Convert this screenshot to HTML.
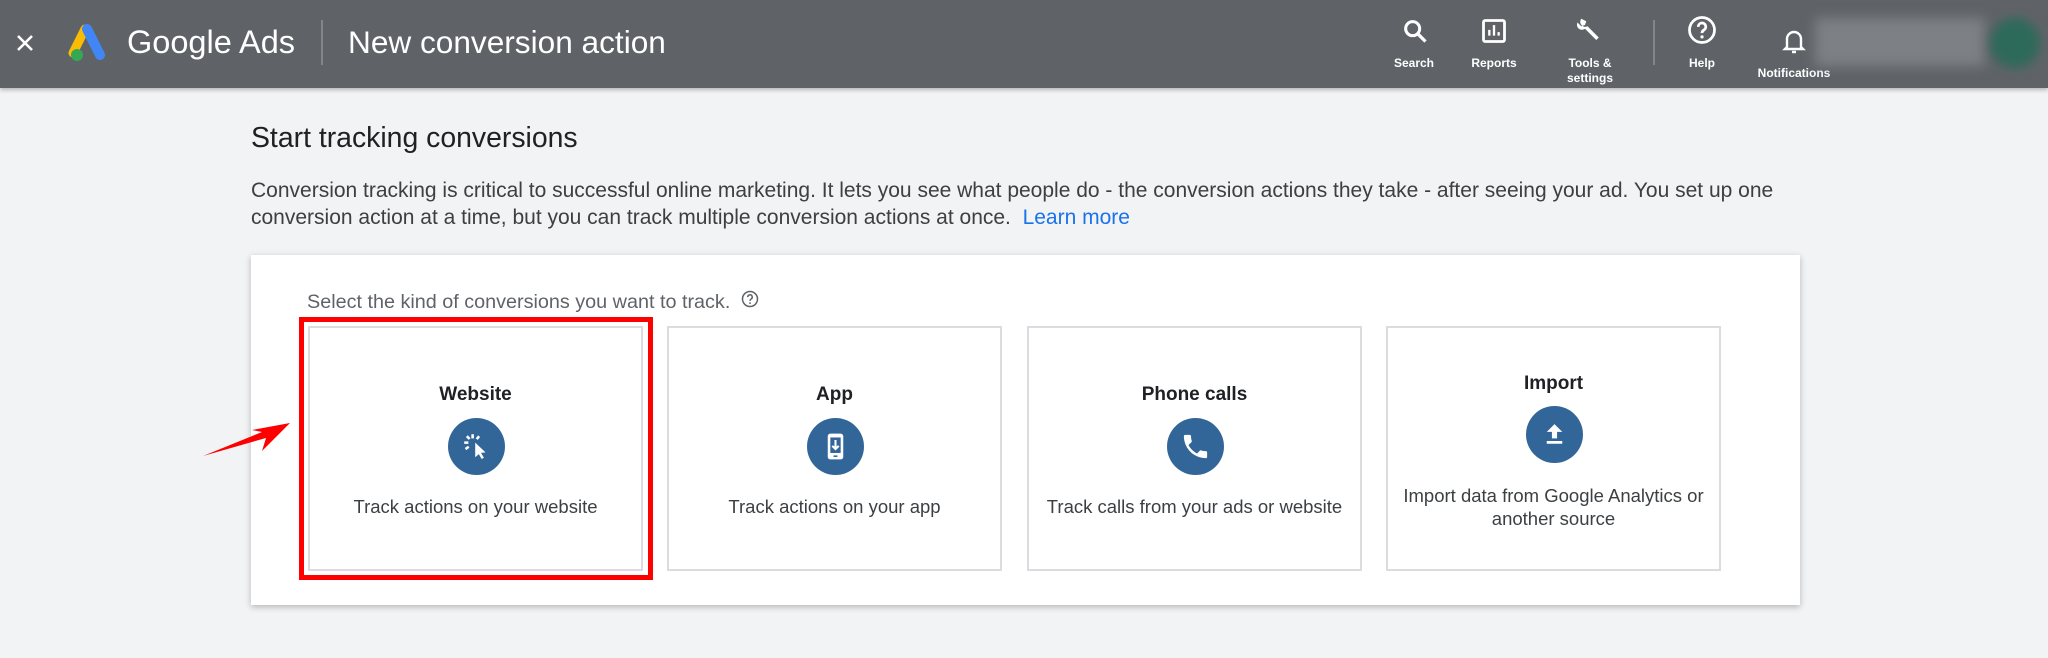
<!DOCTYPE html>
<html><head><meta charset="utf-8"><style>
*{margin:0;padding:0;box-sizing:border-box}
body{width:2048px;height:658px;background:#f1f3f4;font-family:"Liberation Sans",Arial,sans-serif;position:relative;overflow:hidden}
.hdr{position:absolute;left:0;top:0;width:2048px;height:88px;background:#5f6368;box-shadow:0 2px 4px rgba(0,0,0,.25)}
.a{position:absolute}
.lbl{position:absolute;color:#fff;font-size:12px;font-weight:bold;text-align:center;transform:translateX(-50%);line-height:15px;white-space:nowrap}
.panel{position:absolute;left:251px;top:255px;width:1549px;height:350px;background:#fff;box-shadow:0 2px 6px rgba(0,0,0,.25)}
.card{position:absolute;top:326px;width:335px;height:245px;border:2px solid #dadce0;background:#fff;text-align:center}
.card h3{position:absolute;left:0;right:0;font-size:19px;font-weight:bold;color:#202124}
.card .ic{position:absolute;left:50%;width:57px;height:57px;margin-left:-28px;border-radius:50%;background:#326699}
.card .ic svg{position:absolute;left:13px;top:13px}
.card p{position:absolute;left:0;right:0;font-size:18.5px;color:#3c4043;line-height:23px}
</style></head><body>
<div class="hdr">
<svg class="a" style="left:15px;top:33px" width="20" height="20" viewBox="0 0 20 20"><path d="M3 3L17 17M17 3L3 17" stroke="#fff" stroke-width="2.6"/></svg>
<svg class="a" style="left:68px;top:23px" width="42" height="40" viewBox="0 0 42 40"><path d="M17 6L5 30" stroke="#fbbc04" stroke-width="9" stroke-linecap="round"/><path d="M19 6L32 32" stroke="#4285f4" stroke-width="10" stroke-linecap="round"/><circle cx="9" cy="32" r="6" fill="#34a853"/></svg>
<div class="a" style="left:127px;top:24px;color:#fff;font-size:32.5px">Google Ads</div>
<div class="a" style="left:321px;top:20px;width:2px;height:45px;background:#80868b"></div>
<div class="a" style="left:348px;top:24px;color:#fff;font-size:31.6px">New conversion action</div>
<svg class="a" style="left:1401px;top:17px" width="28" height="28" viewBox="0 0 24 24"><circle cx="10" cy="10" r="6" stroke="#fff" stroke-width="2.6" fill="none"/><path d="M14.5 14.5L21 21" stroke="#fff" stroke-width="2.8"/></svg>
<div class="lbl" style="left:1414px;top:56px">Search</div>
<svg class="a" style="left:1480px;top:17px" width="28" height="28" viewBox="0 0 24 24"><rect x="3" y="3" width="18" height="18" rx="1.5" stroke="#fff" stroke-width="2.4" fill="none"/><path d="M8 16V11M12 16V7M16 16V13" stroke="#fff" stroke-width="2"/></svg>
<div class="lbl" style="left:1494px;top:56px">Reports</div>
<svg class="a" style="left:1575px;top:15px" width="30" height="30" viewBox="0 0 24 24"><path d="M5 3a4 4 0 0 0 5 6l9 9-2 2-9-9a4 4 0 0 1-6-5l3 3 3-1 1-3z" fill="#fff"/></svg>
<div class="lbl" style="left:1590px;top:56px">Tools &amp;<br>settings</div>
<div class="a" style="left:1653px;top:20px;width:2px;height:45px;background:#80868b"></div>
<svg class="a" style="left:1687px;top:15px" width="30" height="30" viewBox="0 0 24 24"><circle cx="12" cy="12" r="10" stroke="#fff" stroke-width="2.2" fill="none"/><path d="M9 9.5a3 3 0 1 1 4.5 2.5c-1 .6-1.5 1.2-1.5 2.5" stroke="#fff" stroke-width="2.2" fill="none"/><circle cx="12" cy="17.5" r="1.3" fill="#fff"/></svg>
<div class="lbl" style="left:1702px;top:56px">Help</div>
<svg class="a" style="left:1782px;top:27px" width="24" height="28" viewBox="0 0 24 28"><path d="M5 20V12a7 7 0 0 1 14 0v8l2 2H3z" stroke="#fff" stroke-width="2.4" fill="none"/><path d="M10 25h4" stroke="#fff" stroke-width="2.4"/></svg>
<div class="lbl" style="left:1794px;top:66px">Notifications</div>
<div class="a" style="left:1815px;top:18px;width:170px;height:48px;background:#7d8084;filter:blur(6px)"></div>
<div class="a" style="left:1990px;top:18px;width:50px;height:50px;border-radius:50%;background:#2e6a59;filter:blur(5px)"></div>
</div>
<div class="a" style="left:251px;top:122px;font-size:28.4px;color:#202124">Start tracking conversions</div>
<div class="a" style="left:251px;top:177px;width:1600px;font-size:21px;line-height:27px;color:#3c4043;white-space:nowrap">Conversion tracking is critical to successful online marketing. It lets you see what people do - the conversion actions they take - after seeing your ad. You set up one<br>conversion action at a time, but you can track multiple conversion actions at once. &nbsp;<span style="color:#1a73e8">Learn more</span></div>
<div class="panel"></div>
<div class="a" style="left:307px;top:291px;font-size:19.8px;color:#5f6368">Select the kind of conversions you want to track.</div>
<svg class="a" style="left:741px;top:290px" width="18" height="18" viewBox="0 0 24 24"><circle cx="12" cy="12" r="10" stroke="#5f6368" stroke-width="2" fill="none"/><path d="M9 9.5a3 3 0 1 1 4.5 2.5c-1 .6-1.5 1.2-1.5 2.5" stroke="#5f6368" stroke-width="2" fill="none"/><circle cx="12" cy="17.5" r="1.2" fill="#5f6368"/></svg>

<div class="card" style="left:308px"><h3 style="top:56px">Website</h3><div class="ic" style="top:90px"><svg width="31" height="31" viewBox="0 0 24 24"><path d="M11 9l8 7.5-3.5.4 2.2 3.8-1.7 1-2.2-3.8-2.8 2.4z" fill="#fff"/><path d="M9 2.5v3.2M2.5 9h3.2M3.5 14l2.5-1.8M14 4l-1.8 2.3M4.5 4l2.2 2.2" stroke="#fff" stroke-width="2"/></svg></div><p style="top:167px">Track actions on your website</p></div>
<div class="card" style="left:667px"><h3 style="top:56px">App</h3><div class="ic" style="top:90px"><svg width="31" height="31" viewBox="0 0 24 24"><rect x="6" y="2" width="12" height="20" rx="2" fill="#fff"/><rect x="8" y="5" width="8" height="12" fill="#326699"/><path d="M12 7v7M9.5 11.5L12 14l2.5-2.5" stroke="#fff" stroke-width="1.6" fill="none"/><path d="M10.5 19.5h3" stroke="#326699" stroke-width="1.2"/></svg></div><p style="top:167px">Track actions on your app</p></div>
<div class="card" style="left:1027px"><h3 style="top:56px">Phone calls</h3><div class="ic" style="top:90px"><svg width="31" height="31" viewBox="0 0 24 24"><path d="M6.6 10.8c1.4 2.8 3.8 5.1 6.6 6.6l2.2-2.2c.3-.3.7-.4 1-.2 1.1.4 2.3.6 3.6.6.6 0 1 .4 1 1V20c0 .6-.4 1-1 1C10.6 21 3 13.4 3 4c0-.6.4-1 1-1h3.5c.6 0 1 .4 1 1 0 1.3.2 2.5.6 3.6.1.3 0 .7-.2 1z" fill="#fff"/></svg></div><p style="top:167px">Track calls from your ads or website</p></div>
<div class="card" style="left:1386px"><h3 style="top:45px">Import</h3><div class="ic" style="top:78px"><svg width="31" height="31" viewBox="0 0 24 24"><path d="M12 4l-6 6h4v5h4v-5h4z M6 17h12v2.2H6z" fill="#fff"/></svg></div><p style="top:156px">Import data from Google Analytics or<br>another source</p></div>

<div class="a" style="left:299px;top:317px;width:354px;height:263px;border:5px solid #f00"></div>
<svg class="a" style="left:200px;top:418px" width="92" height="42" viewBox="0 0 92 42"><path d="M3 38L66 20 62 33 90 5 52 12 62 14z" fill="#f00"/></svg>
</body></html>
